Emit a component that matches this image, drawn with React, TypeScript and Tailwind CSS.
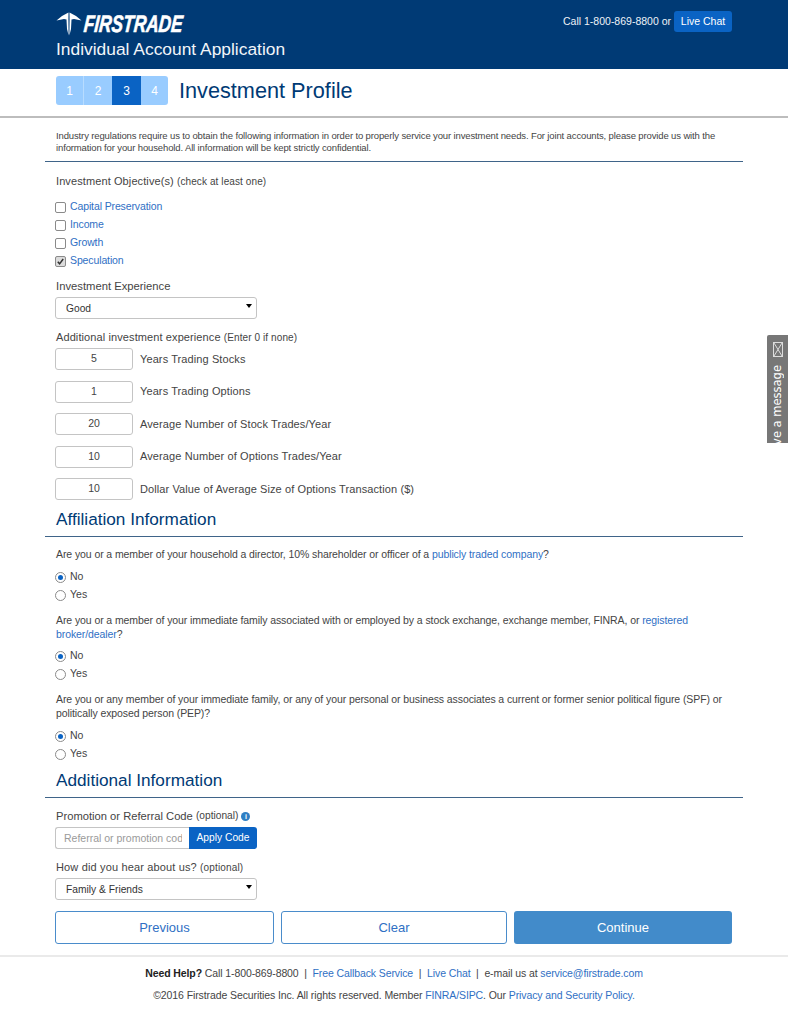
import React from "react";

const link = "text-[#2f6fc4]";

function Check({ label, checked }: { label: string; checked?: boolean }) {
  return (
    <div className="flex items-center h-[18px]">
      <span className={`-ml-px w-[9px] h-[9px] box-content border border-[#8a8a8a] rounded-[2px] flex items-center justify-center ${checked ? "bg-[#dcdcdc]" : "bg-white"}`}>
        {checked && (
          <svg viewBox="0 0 10 10" className="w-[9px] h-[9px]">
            <path d="M2 5.2 L4 7.6 L8 2.2" fill="none" stroke="#333" strokeWidth="1.7" />
          </svg>
        )}
      </span>
      <span className={`ml-[4px] text-[10.5px] tracking-[-0.12px] ${link}`}>{label}</span>
    </div>
  );
}

function Radio({ label, checked }: { label: string; checked?: boolean }) {
  return (
    <div className="flex items-center h-[18px]">
      <span className="-ml-px w-[9px] h-[9px] box-content border border-[#8a8a8a] rounded-full flex items-center justify-center bg-white">
        {checked && <span className="w-[5px] h-[5px] rounded-full bg-[#0a63c4]" />}
      </span>
      <span className="ml-[4px] text-[10.5px] text-[#444]">{label}</span>
    </div>
  );
}

function Select({ value }: { value: string }) {
  return (
    <div className="relative -ml-px w-[202px] h-[22px]">
      <select defaultValue={value} className="appearance-none w-full h-full border border-[#c4c4c4] rounded-[3px] bg-white pl-[10px] pt-[1px] text-[10.25px] text-[#333]">
        <option>{value}</option>
      </select>
      <span className="absolute right-[5px] top-[9px] w-0 h-0 border-l-[3px] border-r-[3px] border-t-[4px] border-l-transparent border-r-transparent border-t-black" />
    </div>
  );
}

function NumRow({ value, label }: { value: string; label: string }) {
  return (
    <div className="flex items-center h-[22px] -ml-px">
      <div className="w-[78px] h-[22px] border border-[#c4c4c4] rounded-[3px] flex items-center justify-center text-[10.5px] text-[#444] bg-white">{value}</div>
      <span className="ml-[7px] text-[11px] tracking-[0.1px] text-[#444]">{label}</span>
    </div>
  );
}

function SectionTitle({ children }: { children: React.ReactNode }) {
  return (
    <div className="-mx-[11px] px-[11px] border-b border-[#3f6489] h-[27px]">
      <h2 className="text-[17.2px] leading-[18px] text-[#003a75]">{children}</h2>
    </div>
  );
}

function Question({ children, className = "" }: { children: React.ReactNode; className?: string }) {
  return <p className={`text-[10.5px] leading-[14px] tracking-[-0.09px] text-[#444] ${className}`}>{children}</p>;
}

export default function App() {
  return (
    <div className="relative w-[788px] h-[1024px] overflow-hidden bg-white font-['Liberation_Sans',Arial,sans-serif]">
      {/* Header */}
      <header className="h-[69px] bg-[#003a75] pl-[56px] pr-[56px] flex justify-between">
        <div>
          <div className="flex items-center h-[27px] mt-[10px]">
            <svg viewBox="0 0 26 25" className="w-[26px] h-[25px] shrink-0">
              <path d="M12.5 1.5 L6 5 L0.5 9.5 L8 8 L10.5 8.5 L11 18 L12.6 24.5 L12.4 8 Z M13.5 1.5 L20 5 L25.5 9.5 L18 8 L15.5 8.5 L15 18 L13.4 24.5 L13.6 8 Z" fill="#fff" />
            </svg>
            <span className="ml-[2px] origin-left [transform:scaleX(0.72)_skewX(-7deg)] text-[24px] leading-[25px] font-bold italic text-white [-webkit-text-stroke:0.6px_white]">FIRSTRADE</span>
          </div>
          <div className="text-[17.4px] leading-[20px] mt-[2px] text-[#f2f5f9]">Individual Account Application</div>
        </div>
        <div className="flex items-start pt-[11px]">
          <span className="text-[10.5px] leading-[21px] text-[#eef2f7]">Call 1-800-869-8800 or</span>
          <span className="ml-[3px] w-[58px] h-[21px] rounded-[3px] bg-[#0a63c4] text-white text-[10.5px] leading-[21px] text-center">Live Chat</span>
        </div>
      </header>

      {/* Step bar */}
      <div className="h-[49px] border-b-2 border-[#bdbdbd] pl-[56px] flex items-start pt-[7px]">
        <div className="flex h-[29px] w-[112px] rounded-[3px] overflow-hidden text-[12px] text-white">
          <div className="w-[28px] bg-[#99ccff] border-r border-[#b8dcff] flex items-center justify-center">1</div>
          <div className="w-[28px] bg-[#99ccff] flex items-center justify-center">2</div>
          <div className="w-[29px] bg-[#0a63c4] flex items-center justify-center">3</div>
          <div className="w-[27px] bg-[#99ccff] flex items-center justify-center">4</div>
        </div>
        <h1 className="ml-[11px] text-[21.7px] leading-[29px] text-[#003a75]">Investment Profile</h1>
      </div>

      {/* Main */}
      <main className="ml-[45px] w-[698px] px-[11px]">
        <div className="-mx-[11px] px-[11px] border-b border-[#3f6489] h-[44px] pt-[12px]">
          <p className="text-[9.5px] leading-[12px] tracking-[-0.13px] text-[#444]">
            Industry regulations require us to obtain the following information in order to properly service your investment needs. For joint accounts, please provide us with the information for your household. All information will be kept strictly confidential.
          </p>
        </div>

        <div className="mt-[12px] text-[11px] leading-[14px] text-[#444] tracking-[0.1px]">
          Investment Objective(s) <span className="text-[10px]">(check at least one)</span>
        </div>
        <div className="mt-[9px]">
          <Check label="Capital Preservation" />
          <Check label="Income" />
          <Check label="Growth" />
          <Check label="Speculation" checked />
        </div>

        <div className="mt-[9px] text-[11.25px] leading-[14px] text-[#444]">Investment Experience</div>
        <div className="mt-[2px]"><Select value="Good" /></div>

        <div className="mt-[13px] text-[11px] leading-[14px] tracking-[0.1px] text-[#444]">
          Additional investment experience <span className="text-[10px]">(Enter 0 if none)</span>
        </div>
        <div className="mt-[3px] flex flex-col gap-[10.5px]">
          <NumRow value="5" label="Years Trading Stocks" />
          <NumRow value="1" label="Years Trading Options" />
          <NumRow value="20" label="Average Number of Stock Trades/Year" />
          <NumRow value="10" label="Average Number of Options Trades/Year" />
          <NumRow value="10" label="Dollar Value of Average Size of Options Transaction ($)" />
        </div>

        <div className="mt-[10px]"><SectionTitle>Affiliation Information</SectionTitle></div>

        <Question className="mt-[10px]">
          Are you or a member of your household a director, 10% shareholder or officer of a <span className={link}>publicly traded company</span>?
        </Question>
        <div className="mt-[7px]">
          <Radio label="No" checked />
          <Radio label="Yes" />
        </div>

        <Question className="mt-[9px]">
          Are you or a member of your immediate family associated with or employed by a stock exchange, exchange member, FINRA, or <span className={link}>registered broker/dealer</span>?
        </Question>
        <div className="mt-[6px]">
          <Radio label="No" checked />
          <Radio label="Yes" />
        </div>

        <Question className="mt-[9px]">
          Are you or any member of your immediate family, or any of your personal or business associates a current or former senior political figure (SPF) or politically exposed person (PEP)?
        </Question>
        <div className="mt-[7px]">
          <Radio label="No" checked />
          <Radio label="Yes" />
        </div>

        <div className="mt-[8px]"><SectionTitle>Additional Information</SectionTitle></div>

        <div className="mt-[11px] flex items-center text-[11.2px] leading-[14px] text-[#444]">
          Promotion or Referral Code&nbsp;<span className="text-[10.2px]">(optional)</span>
          <span className="ml-[3px] w-[9px] h-[9px] rounded-full bg-[#2f7fc4] text-white text-[7px] leading-[9px] font-bold text-center">i</span>
        </div>
        <div className="mt-[4px] -ml-px flex w-[202px] h-[22px]">
          <div className="w-[134px] border border-r-0 border-[#c4c4c4] rounded-l-[3px] pl-[8px] text-[10.5px] leading-[20px] text-[#9a9a9a]">
            <div className="w-[118px] overflow-hidden whitespace-nowrap">Referral or promotion code</div>
          </div>
          <div className="w-[68px] bg-[#0a63c4] text-white text-[10.25px] leading-[22px] text-center rounded-r-[3px]">Apply Code</div>
        </div>

        <div className="mt-[11px] text-[11px] leading-[14px] tracking-[0.15px] text-[#444]">
          How did you hear about us? <span className="text-[10px]">(optional)</span>
        </div>
        <div className="mt-[1px]"><Select value="Family & Friends" /></div>

        <div className="mt-[13px] -ml-px flex gap-[7px] text-[13px]">
          <div className="w-[219px] h-[33px] border border-[#4a8ccb] rounded-[3px] text-center leading-[31px] text-[#2f6fc4]">Previous</div>
          <div className="w-[226px] h-[33px] border border-[#4a8ccb] rounded-[3px] text-center leading-[31px] text-[#2f6fc4]">Clear</div>
          <div className="w-[218px] h-[33px] rounded-[3px] bg-[#428bca] text-center leading-[33px] text-white">Continue</div>
        </div>
      </main>

      {/* Footer */}
      <footer className="mt-[11px] border-t-2 border-[#eaeaea] pt-[9px] text-center text-[10.5px] leading-[14px] tracking-[-0.1px] text-[#444]">
        <div>
          <b className="text-[#222]">Need Help?</b> Call 1-800-869-8800 &nbsp;|&nbsp; <span className={link}>Free Callback Service</span> &nbsp;|&nbsp; <span className={link}>Live Chat</span> &nbsp;|&nbsp; e-mail us at <span className={link}>service@firstrade.com</span>
        </div>
        <div className="mt-[8px]">
          ©2016 Firstrade Securities Inc. All rights reserved. Member <span className={link}>FINRA/SIPC</span>. Our <span className={link}>Privacy and Security Policy.</span>
        </div>
      </footer>

      {/* Side tab */}
      <div className="absolute left-[767px] top-[335px] w-[21px] h-[108px] bg-[#777] overflow-hidden rounded-tl-[2px]">
        <svg viewBox="0 0 10 15" className="absolute left-[6px] top-[7px] w-[10px] h-[15px]">
          <rect x="0.5" y="0.5" width="9" height="14" fill="none" stroke="#ddd" />
          <path d="M1 1 L5 7.5 L9 1 M1 14 L5 7.5 L9 14" fill="none" stroke="#ddd" />
        </svg>
        <span className="absolute left-0 top-[30px] [writing-mode:vertical-rl] rotate-180 whitespace-nowrap text-[11.5px] leading-[21px] text-white font-['DejaVu_Sans',sans-serif]">Leave a message</span>
      </div>
    </div>
  );
}
